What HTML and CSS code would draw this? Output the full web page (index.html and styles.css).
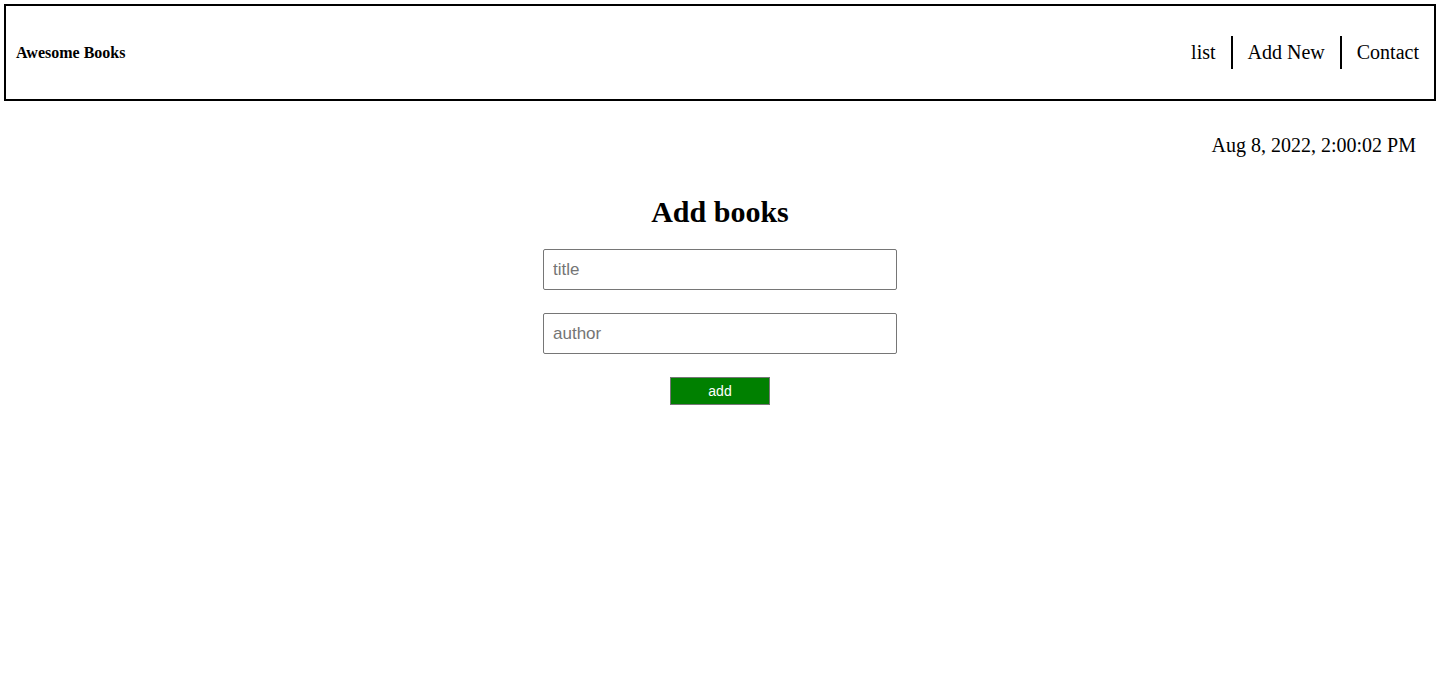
FILE: index.html
```html
<!DOCTYPE html>
<html lang="en">
<head>
<meta charset="utf-8">
<title>Awesome Books</title>
<link rel="stylesheet" href="styles.css">
</head>
<body>
<header class="header">
  <h1 class="brand">Awesome Books</h1>
  <nav class="nav">
    <a class="nav-link" href="#">list</a>
    <a class="nav-link nav-sep" href="#">Add New</a>
    <a class="nav-link nav-sep" href="#">Contact</a>
  </nav>
</header>
<div class="date">Aug 8, 2022, 2:00:02 PM</div>
<main class="add">
  <h2 class="add-title">Add books</h2>
  <form class="form">
    <input class="field" type="text" placeholder="title">
    <input class="field" type="text" placeholder="author">
    <button class="btn" type="button">add</button>
  </form>
</main>
</body>
</html>
```
FILE: styles.css
```css
html, body {
  margin: 0;
  padding: 0;
  background: #fff;
}
body {
  padding: 4px;
  font-family: "Liberation Serif", "Times New Roman", serif;
  color: #000;
}
.header {
  display: flex;
  align-items: center;
  justify-content: space-between;
  height: 93px;
  border: 2px solid #000;
  padding-left: 10px;
}
.brand {
  margin: 0;
  font-size: 16px;
  font-weight: bold;
  line-height: 18px;
}
.nav {
  display: flex;
  align-items: center;
}
.nav-link {
  display: block;
  padding: 5px 15px;
  font-size: 20px;
  line-height: 23px;
  color: #000;
  text-decoration: none;
}
.nav-sep {
  border-left: 2px solid #000;
}
.date {
  padding-top: 33px;
  padding-right: 20px;
  text-align: right;
  font-size: 20px;
  line-height: 23px;
}
.add {
  display: flex;
  flex-direction: column;
  align-items: center;
}
.add-title {
  margin: 38px 0 0;
  font-size: 30px;
  line-height: 34px;
  font-weight: bold;
}
.form {
  display: flex;
  flex-direction: column;
  align-items: center;
  gap: 23px;
  margin-top: 20px;
}
.field {
  box-sizing: border-box;
  width: 354px;
  height: 41px;
  margin: 0;
  padding: 0 9px;
  border: 1px solid #767676;
  border-radius: 2px;
  font-family: "Liberation Sans", Arial, sans-serif;
  font-size: 17px;
  color: #000;
  background: #fff;
}
.field::placeholder {
  color: #757575;
}
.btn {
  box-sizing: border-box;
  width: 100px;
  height: 28px;
  margin: 0;
  padding: 0;
  border: 1px solid #767676;
  background: #008000;
  color: #fff;
  font-family: "Liberation Sans", Arial, sans-serif;
  font-size: 14px;
}
```
